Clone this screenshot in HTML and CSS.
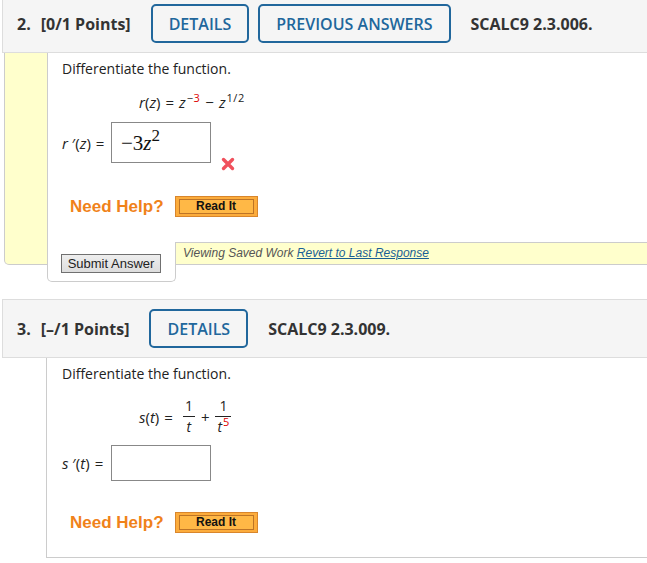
FILE: index.html
```html
<!DOCTYPE html>
<html lang="en">
<head>
<meta charset="utf-8">
<title>SCALC9 2.3</title>
<link rel="stylesheet" href="styles.css">
</head>
<body>
<div class="page">

  <section class="question">
    <div class="q-header">
      <span class="q-num">2.</span><span class="q-points">[0/1 Points]</span>
      <a class="hbtn">DETAILS</a>
      <a class="hbtn">PREVIOUS ANSWERS</a>
      <span class="q-code">SCALC9 2.3.006.</span>
    </div>
    <div class="q-body saved">
      <div class="q-content answered">
        <p class="prompt">Differentiate the function.</p>
        <div class="equation">
          <span class="math"><i>r</i>(<i>z</i>)<span class="op">=</span><i>z</i><sup>−<b class="hl">3</b></sup><span class="op">−</span><i>z</i><sup>1/2</sup></span>
        </div>
        <div class="answer-row">
          <span class="answer-label math"><i>r</i> ′(<i>z</i>)<span class="op">=</span></span>
          <div class="answer-box filled"><span class="serif">−3<i>z</i><sup>2</sup></span></div>
          <svg class="wrong" width="14" height="14" viewBox="0 0 14 14" aria-label="incorrect">
            <path d="M2.5 2.5 L11.5 11.5 M11.5 2.5 L2.5 11.5" stroke="#f0505c" stroke-width="3.4" stroke-linecap="round" fill="none"/>
          </svg>
        </div>
        <div class="help-row">
          <span class="need-help">Need Help?</span>
          <button class="read-it"><span>Read It</span></button>
        </div>
      </div>
      <div class="q-footer">
        <div class="submit-tab"><button class="submit">Submit Answer</button></div>
        <div class="saved-bar"><em>Viewing Saved Work</em> <a class="revert">Revert to Last Response</a></div>
      </div>
    </div>
  </section>

  <section class="question second">
    <div class="q-header">
      <span class="q-num">3.</span><span class="q-points">[–/1 Points]</span>
      <a class="hbtn">DETAILS</a>
      <span class="q-code">SCALC9 2.3.009.</span>
    </div>
    <div class="q-body plain">
      <div class="q-content">
        <p class="prompt">Differentiate the function.</p>
        <div class="equation">
          <span class="math"><i>s</i>(<i>t</i>)<span class="op">=</span></span>
          <span class="frac"><span class="num">1</span><span class="den"><i>t</i></span></span>
          <span class="math"><span class="op plus">+</span></span>
          <span class="frac"><span class="num">1</span><span class="den"><i>t</i><sup class="hl">5</sup></span></span>
        </div>
        <div class="answer-row">
          <span class="answer-label math"><i>s</i> ′(<i>t</i>)<span class="op">=</span></span>
          <div class="answer-box"></div>
        </div>
        <div class="help-row">
          <span class="need-help">Need Help?</span>
          <button class="read-it"><span>Read It</span></button>
        </div>
      </div>
    </div>
  </section>

</div>
</body>
</html>
```

FILE: styles.css
```css
html, body {
  margin: 0;
  padding: 0;
  background: #ffffff;
  overflow: hidden;
}

body {
  font-family: "Open Sans", "Liberation Sans", sans-serif;
  color: #222222;
}

.page {
  width: 760px;
  margin-top: -6px;
}

.question {
  margin-left: 2px;
}

.question.second {
  margin-top: 34px;
}

/* header */
.q-header {
  display: flex;
  align-items: center;
  padding: 9px 0 9px 14px;
  background: #f5f5f5;
  border: 1px solid #dddddd;
  font-weight: 700;
  font-size: 16px;
  color: #333333;
}

.q-num {
  margin-right: 10px;
}

.q-points {
  margin-right: 20px;
}

.hbtn {
  box-sizing: border-box;
  height: 39px;
  display: inline-flex;
  align-items: center;
  padding: 0 16px;
  border: 2px solid #21679c;
  border-radius: 5px;
  color: #21679c;
  font-weight: 600;
  font-size: 16px;
}

.hbtn + .hbtn {
  margin-left: 9px;
}

.q-code {
  margin-left: 20px;
}

/* body */
.q-body.saved {
  margin-left: 2px;
  background: #ffffcc;
  border: 1px solid #cccccc;
  border-top: none;
  border-radius: 0 0 0 5px;
}

.q-content {
  background: #ffffff;
  border-left: 1px solid #cccccc;
  padding: 7px 0 24px 15px;
  font-size: 14px;
  line-height: 18px;
}

.q-body.saved .q-content {
  margin-left: 42px;
  padding-left: 14px;
  padding-bottom: 25px;
}

.q-body.plain .q-content {
  margin-left: 44px;
  border-bottom: 1px solid #cccccc;
}

.prompt {
  margin: 0;
}

.equation {
  display: flex;
  align-items: center;
  margin-top: 15px;
  padding-left: 77px;
  min-height: 18px;
}

.math {
  font-size: 15px;
  white-space: nowrap;
}

.math i {
  font-style: italic;
}

.op {
  margin: 0 5px 0 5px;
}

.op.plus {
  margin: 0 1px;
}

.math sup {
  font-size: 11px;
  line-height: 0;
  vertical-align: 6px;
  margin-left: 1px;
  letter-spacing: 0.5px;
}

.hl {
  color: #dd0000;
  font-weight: 400;
}

.frac {
  display: inline-flex;
  flex-direction: column;
  align-items: center;
  margin: 0 5px;
  font-size: 14px;
}

.frac .num {
  line-height: 16px;
  padding: 0 2px 2px;
  border-bottom: 1px solid #222222;
  align-self: stretch;
  text-align: center;
}

.frac .den {
  line-height: 16px;
  padding: 2px 2px 0;
  white-space: nowrap;
}

.frac sup {
  font-size: 11px;
  line-height: 0;
  vertical-align: 6px;
  margin-left: 1px;
}

/* answer */
.answer-row {
  display: flex;
  align-items: center;
  margin-top: 10px;
}

.answered .answer-row {
  margin-top: 11px;
}

.answer-label {
  width: 49px;
}

.answer-label .op {
  margin: 0 0 0 5px;
}

.answer-box {
  box-sizing: border-box;
  width: 100px;
  height: 36px;
  border: 1px solid #888888;
  background: #ffffff;
}

.answer-box.filled {
  height: 41px;
  padding: 8px 0 0 9px;
}

.serif {
  font-family: "Liberation Serif", serif;
  font-size: 21px;
  line-height: 24px;
  color: #111111;
}

.serif sup {
  font-size: 17px;
  line-height: 0;
  vertical-align: 9px;
}

.wrong {
  align-self: flex-end;
  margin: 0 0 -8px 10px;
}

/* help */
.help-row {
  display: flex;
  align-items: center;
  margin-top: 31px;
  margin-left: 8px;
}

.answered .help-row {
  margin-top: 33px;
}

.need-help {
  font-family: "Liberation Sans", Arial, sans-serif;
  font-weight: 700;
  font-size: 17px;
  line-height: 20px;
  color: #f0821a;
}

.read-it {
  box-sizing: border-box;
  width: 83px;
  height: 21px;
  margin-left: 11px;
  padding: 2px 3px;
  border: 1px solid #d9862c;
  background: #fcac3c;
  cursor: pointer;
}

.read-it span {
  display: block;
  border: 1px solid #bd7426;
  background: #ffb846;
  font-family: "Liberation Sans", Arial, sans-serif;
  font-weight: 700;
  font-size: 12px;
  line-height: 13px;
  color: #111111;
  text-align: center;
}

/* footer of saved question */
.q-footer {
  display: flex;
  align-items: flex-start;
}

.submit-tab {
  box-sizing: border-box;
  display: flex;
  align-items: flex-start;
  width: 129px;
  height: 40px;
  margin-left: 42px;
  margin-bottom: -18px;
  padding: 12px 0 0 13px;
  background: #ffffff;
  border: 1px solid #cccccc;
  border-top: none;
  border-radius: 0 0 5px 5px;
}

.submit {
  box-sizing: border-box;
  width: 100px;
  height: 19px;
  padding: 0;
  border: 1px solid #707070;
  background: linear-gradient(#eeeeee, #dddddd);
  font-family: "Liberation Sans", Arial, sans-serif;
  font-size: 13px;
  line-height: 17px;
  color: #222222;
}

.saved-bar {
  flex: 1;
  box-sizing: border-box;
  height: 22px;
  border-top: 1px solid #cccccc;
  padding-left: 7px;
  font-family: "Liberation Sans", Arial, sans-serif;
  font-size: 12px;
  line-height: 20px;
  color: #555555;
}

.saved-bar em {
  font-style: italic;
}

.revert {
  font-style: italic;
  color: #1a5f95;
  text-decoration: underline;
}
```
